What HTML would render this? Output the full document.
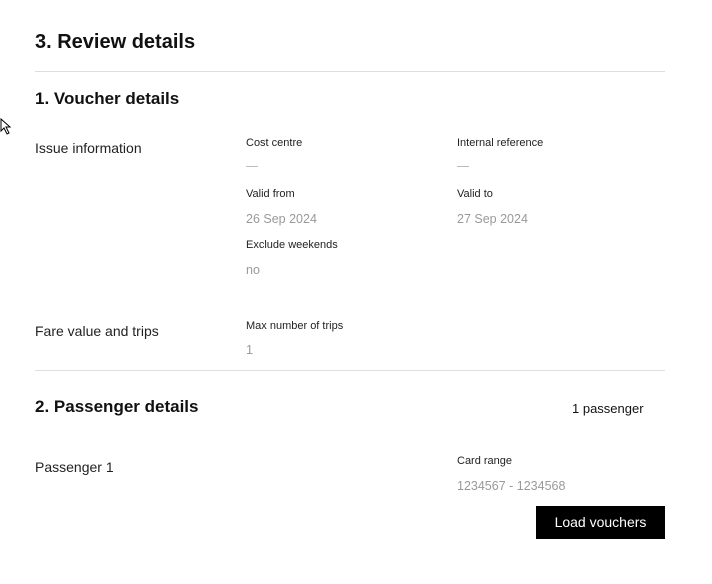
<!DOCTYPE html>
<html><head><style>
body{margin:0;width:712px;height:584px;background:#fff;font-family:"Liberation Sans",sans-serif;position:relative;overflow:hidden;color:#111}
.a{position:absolute;white-space:nowrap}
.h1{font-size:20px;font-weight:bold}
.h2{font-size:17px;font-weight:bold}
.lbl{font-size:14px;color:#222}
.s{font-size:11px;color:#222}
.v{font-size:12.5px;color:#999}
.hr{position:absolute;left:35px;width:630px;height:1px;background:#ddd}
.dash{position:absolute;width:12px;height:1px;background:#bbb}
</style></head><body>
<div class="a h1" style="left:35px;top:31px">3. Review details</div>
<div class="hr" style="top:71px"></div>
<div class="a h2" style="left:35px;top:89px">1. Voucher details</div>
<svg class="a" style="left:0;top:118px" width="12" height="18" viewBox="0 0 12 18"><path d="M1 1 L1 13 L4 10 L7 16 L9 15 L6 9 L10 9 Z" fill="#fff" stroke="#000" stroke-width="1"/></svg>
<div class="a lbl" style="left:35px;top:140px">Issue information</div>
<div class="a s" style="left:246px;top:137px">Cost centre</div>
<div class="dash" style="left:246px;top:166px"></div>
<div class="a s" style="left:457px;top:137px">Internal reference</div>
<div class="dash" style="left:457px;top:166px"></div>
<div class="a s" style="left:246px;top:188px">Valid from</div>
<div class="a v" style="left:246px;top:212px">26 Sep 2024</div>
<div class="a s" style="left:457px;top:188px">Valid to</div>
<div class="a v" style="left:457px;top:212px">27 Sep 2024</div>
<div class="a s" style="left:246px;top:239px">Exclude weekends</div>
<div class="a v" style="left:246px;top:263px">no</div>
<div class="a lbl" style="left:35px;top:323px">Fare value and trips</div>
<div class="a s" style="left:246px;top:320px">Max number of trips</div>
<div class="a v" style="left:246px;top:343px">1</div>
<div class="hr" style="top:370px"></div>
<div class="a h2" style="left:35px;top:397px">2. Passenger details</div>
<div class="a" style="left:572px;top:401px;font-size:13px">1 passenger</div>
<div class="a lbl" style="left:35px;top:459px">Passenger 1</div>
<div class="a s" style="left:457px;top:455px">Card range</div>
<div class="a v" style="left:457px;top:479px">1234567 - 1234568</div>
<div class="a" style="left:536px;top:506px;width:129px;height:33px;background:#000;color:#fff;font-size:14px;line-height:33px;text-align:center">Load vouchers</div>
</body></html>
